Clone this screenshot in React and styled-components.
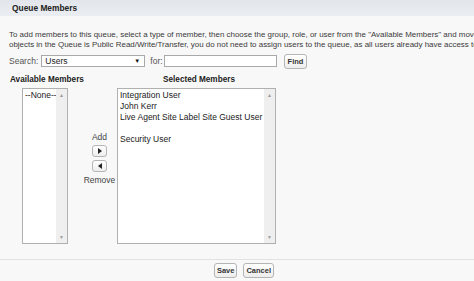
import styled, { createGlobalStyle } from 'styled-components';

const GlobalStyle = createGlobalStyle`
  * {
    box-sizing: border-box;
  }
  body {
    margin: 0;
    background-color: #f8f8f8;
    font-family: 'Liberation Sans', Arial, sans-serif;
    color: #333;
    overflow: hidden;
  }
`;

const StyledPage = styled.div`
  width: 474px;
  height: 281px;
  display: flex;
  flex-direction: column;
  overflow: hidden;
`;

const StyledHeader = styled.div`
  height: 16px;
  display: flex;
  align-items: center;
  padding-left: 12px;
  background: linear-gradient(#e2e5eb, #eaedf1);
  font-size: 8.4px;
  font-weight: bold;
  color: #222;
`;

const StyledBody = styled.div`
  flex: 1;
  padding: 14px 0 0 9px;
`;

const StyledIntro = styled.p`
  margin: 0;
  font-size: 7.95px;
  line-height: 10px;
  white-space: nowrap;
  color: #3a3a3a;
`;

const StyledSearchRow = styled.div`
  display: flex;
  align-items: center;
  height: 16px;
  margin-top: 3px;
  font-size: 8.5px;
  color: #555;
`;

const StyledSelect = styled.div`
  width: 104px;
  height: 12px;
  margin-left: 3px;
  padding: 0 4px 0 3px;
  display: flex;
  align-items: center;
  justify-content: space-between;
  background: #fff;
  border: 1px solid #a9a9a9;
  font-size: 8.5px;
  color: #222;
`;

const StyledArrow = styled.span`
  font-size: 6px;
  color: #111;
`;

const StyledForLabel = styled.span`
  margin-left: 5px;
`;

const StyledInput = styled.div`
  width: 113px;
  height: 12px;
  margin-left: 1px;
  background: #fff;
  border: 1px solid #a9a9a9;
`;

const StyledButton = styled.button`
  height: ${({ $height }) => $height || 15}px;
  width: ${({ $width }) => ($width ? `${$width}px` : 'auto')};
  padding: 0 ${({ $pad }) => $pad ?? 2}px;
  margin-left: ${({ $ml }) => $ml || 0}px;
  display: flex;
  align-items: center;
  justify-content: center;
  background: linear-gradient(#ffffff, #ededed);
  border: 1px solid #b5b5b5;
  border-radius: 3px;
  font-family: inherit;
  font-size: 7.5px;
  font-weight: bold;
  color: #333;
`;

const StyledLabelRow = styled.div`
  display: flex;
  margin-top: 5px;
  font-size: 8.2px;
  line-height: 11px;
  font-weight: bold;
  color: #222;
`;

const StyledAvailableLabel = styled.div`
  width: 108px;
  padding-left: 1px;
`;

const StyledSelectedLabel = styled.div`
  width: 164px;
  text-align: center;
`;

const StyledListRow = styled.div`
  display: flex;
  margin-top: 3px;
  padding-left: 13px;
`;

const StyledListBox = styled.div`
  width: ${({ $width }) => $width}px;
  height: 156px;
  display: flex;
  background: #fff;
  border: 1px solid #b0b0b0;
`;

const StyledOptions = styled.div`
  flex: 1;
  padding: 1px 2px;
  font-size: 8.5px;
  line-height: 11px;
  color: #222;
  white-space: nowrap;
  overflow: hidden;
`;

const StyledOption = styled.div`
  height: 11px;
`;

const StyledScrollbar = styled.div`
  width: 11px;
  display: flex;
  flex-direction: column;
  justify-content: space-between;
  align-items: center;
  padding: 3px 0;
  background: #efefef;
  font-size: 5px;
  color: #9a9a9a;
`;

const StyledMover = styled.div`
  width: 35px;
  margin-left: 14px;
  padding-top: 44px;
  display: flex;
  flex-direction: column;
  align-items: center;
  gap: 3px;
  font-size: 8.5px;
  line-height: 10px;
  color: #444;
`;

const StyledMoverButtons = styled.div`
  display: flex;
  flex-direction: column;
  gap: 3px;
`;

const StyledFooter = styled.div`
  height: 22px;
  border-top: 1px solid #e2e2e2;
  display: flex;
  align-items: center;
  justify-content: center;
  padding-left: 14px;
  gap: 6px;
`;

const ListBox = ({ width, items }) => (
  <StyledListBox $width={width}>
    <StyledOptions>
      {items.map((item, i) => (
        <StyledOption key={i}>{item}</StyledOption>
      ))}
    </StyledOptions>
    <StyledScrollbar>
      <span>▲</span>
      <span>▼</span>
    </StyledScrollbar>
  </StyledListBox>
);

const App = () => {
  return (
    <StyledPage>
      <GlobalStyle />
      <StyledHeader>Queue Members</StyledHeader>
      <StyledBody>
        <StyledIntro>
          To add members to this queue, select a type of member, then choose the group, role, or user from the "Available Members" and move
          <br />
          objects in the Queue is Public Read/Write/Transfer, you do not need to assign users to the queue, as all users already have access to
        </StyledIntro>
        <StyledSearchRow>
          <span>Search:</span>
          <StyledSelect>
            Users
            <StyledArrow>▼</StyledArrow>
          </StyledSelect>
          <StyledForLabel>for:</StyledForLabel>
          <StyledInput />
          <StyledButton $ml={7} $height={15} $pad={3}>Find</StyledButton>
        </StyledSearchRow>
        <StyledLabelRow>
          <StyledAvailableLabel>Available Members</StyledAvailableLabel>
          <StyledSelectedLabel>Selected Members</StyledSelectedLabel>
        </StyledLabelRow>
        <StyledListRow>
          <ListBox width={46} items={['--None--']} />
          <StyledMover>
            <span>Add</span>
            <StyledMoverButtons>
              <StyledButton $height={12} $pad={0} $width={15}>
                <svg width="4" height="6" viewBox="0 0 4 6"><path d="M0 0L4 3L0 6Z" fill="#222" /></svg>
              </StyledButton>
              <StyledButton $height={12} $pad={0} $width={15}>
                <svg width="4" height="6" viewBox="0 0 4 6"><path d="M4 0L0 3L4 6Z" fill="#222" /></svg>
              </StyledButton>
            </StyledMoverButtons>
            <span>Remove</span>
          </StyledMover>
          <ListBox
            width={159}
            items={['Integration User', 'John Kerr', 'Live Agent Site Label Site Guest User', '', 'Security User']}
          />
        </StyledListRow>
      </StyledBody>
      <StyledFooter>
        <StyledButton $height={15}>Save</StyledButton>
        <StyledButton $height={15}>Cancel</StyledButton>
      </StyledFooter>
    </StyledPage>
  );
};

export default App;
